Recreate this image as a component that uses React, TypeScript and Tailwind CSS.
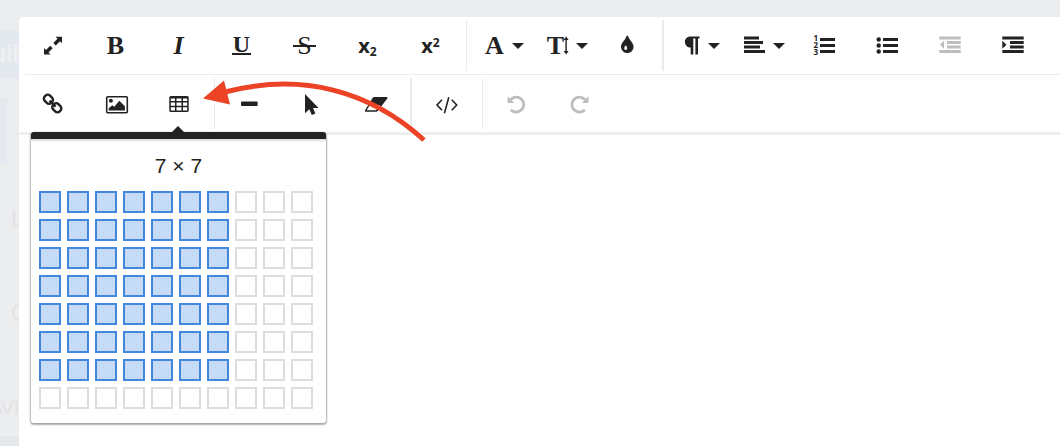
import React, { useState } from 'react';
import clsx from 'clsx';

const COLUMNS = 10;
const ROWS = 8;

type ToolButtonProps = {
  label: string;
  disabled?: boolean;
  dropdown?: boolean;
  onClick?: () => void;
  children: React.ReactNode;
};

const ToolButton: React.FC<ToolButtonProps> = ({ label, disabled, dropdown, onClick, children }) => (
  <button
    type="button"
    aria-label={label}
    disabled={disabled}
    onClick={onClick}
    className={clsx(
      'flex h-[57px] w-[63px] shrink-0 items-center justify-center',
      disabled ? 'text-[#bdbdbd]' : 'text-[#222222]',
      dropdown && 'gap-2 pl-1.5'
    )}
  >
    {children}
    {dropdown && (
      <svg width="12" height="6" viewBox="0 0 12 6" fill="currentColor" aria-hidden="true">
        <path d="M0 0h12L6 6z" />
      </svg>
    )}
  </button>
);

const Icon: React.FC<{ width?: number; children: React.ReactNode }> = ({ width = 23, children }) => (
  <svg
    width={width}
    height="23"
    viewBox={`0 0 ${width} 23`}
    fill="currentColor"
    className="shrink-0 overflow-visible"
    aria-hidden="true"
  >
    {children}
  </svg>
);

const Separator: React.FC<{ thick?: boolean }> = ({ thick }) => (
  <div
    className={clsx('my-[3px] shrink-0 self-stretch bg-[#ebebeb]', thick ? 'mx-[3px] w-0.5' : 'mr-[3px] ml-1 w-px')}
  />
);

const TableMenu: React.FC = () => {
  const [size, setSize] = useState({ rows: 7, cols: 7 });

  return (
    <div className="absolute top-full -left-[116px] z-10 w-[295px] rounded-[3px] border-t-[7px] border-[#222222] bg-white shadow-[0_1px_3px_rgba(0,0,0,0.35),0_1px_1px_1px_rgba(0,0,0,0.16)]">
      <svg
        width="12"
        height="6"
        viewBox="0 0 12 6"
        className="absolute -top-[13px] left-[141px] text-[#222222]"
        fill="currentColor"
        aria-hidden="true"
      >
        <path d="M0 6L6 0l6 6z" />
      </svg>
      <div className="h-[3px] bg-gradient-to-b from-[#d6d4d6] to-white" />
      <div className="px-2 pt-2 pb-[14px]">
        <div className="mb-[10px] text-center text-[21px] leading-[31px] text-[#222222]">
          {size.rows} × {size.cols}
        </div>
        <div className="flex flex-col gap-1.5">
          {Array.from({ length: ROWS }, (_, row) => (
            <div key={row} className="flex gap-1.5">
              {Array.from({ length: COLUMNS }, (_, col) => (
                <button
                  key={col}
                  type="button"
                  aria-label={`${row + 1} × ${col + 1}`}
                  onMouseEnter={() => setSize({ rows: row + 1, cols: col + 1 })}
                  className={clsx(
                    'size-[22px] shrink-0 border-2',
                    row < size.rows && col < size.cols
                      ? 'border-[#4287de] bg-[#c6dbf5]'
                      : 'border-[#dddddd] bg-white'
                  )}
                />
              ))}
            </div>
          ))}
        </div>
      </div>
    </div>
  );
};

// Dimmed page that shows through beside the editor
const Backdrop: React.FC = () => (
  <div className="w-[19px] shrink-0 overflow-hidden whitespace-nowrap" aria-hidden="true">
    <div className="mt-[30px] flex h-12 items-center justify-end bg-[#e3e9ee] text-[23px] font-bold text-[#eef0f2]">
      uil
    </div>
    <div className="mt-5 h-[65px] w-[7px] bg-[#e3e9ee]" />
    <div className="mt-10 pl-[11px] text-[23px] leading-8 text-[#e2e3e5]">L</div>
    <div className="mt-[62px] pl-[11px] text-[23px] leading-8 text-[#e2e3e5]">C</div>
    <div className="mt-[67px] flex justify-end text-[19px] leading-6 text-[#e2e3e5]">AVI</div>
    <div className="mt-4 h-3 bg-[#e2e8eb]" />
  </div>
);

const App: React.FC = () => {
  const [tableOpen, setTableOpen] = useState(true);

  return (
    <div className="flex h-screen overflow-hidden bg-[#ecedef] font-['Liberation_Sans',Arial,sans-serif]">
      <Backdrop />

      <main className="mt-[17px] flex min-w-0 flex-1 flex-col rounded-tl-[5px] bg-white">
        <div role="toolbar" aria-label="Formatting" className="relative border-b-[3px] border-[#edeeef]">
          <div className="flex pl-0.5">
            <ToolButton label="Fullscreen">
              <Icon>
                <path d="M14.500 2.800H21v6.500l-2-2-4.200 4.200-2.500-2.500 4.200-4.200zM9.500 20.500H3V14l2 2 4.200-4.200 2.500 2.500-4.200 4.200z" />
                <path d="M8.500 8.500l7 7" stroke="white" strokeWidth="1.600" />
              </Icon>
            </ToolButton>
            <ToolButton label="Bold">
              <span className="font-['Liberation_Serif',serif] text-[26px] leading-7 font-bold">B</span>
            </ToolButton>
            <ToolButton label="Italic">
              <span className="font-['Liberation_Serif',serif] text-[26px] leading-7 font-bold italic">I</span>
            </ToolButton>
            <ToolButton label="Underline">
              <span className="border-b-2 px-px font-['Liberation_Serif',serif] text-[24px] leading-[17px] font-bold">
                U
              </span>
            </ToolButton>
            <ToolButton label="Strikethrough">
              <span className="relative px-1 font-['Liberation_Serif',serif] text-[26px] leading-7">
                S
                <span className="absolute inset-x-0 top-[13px] h-0.5 bg-current" />
              </span>
            </ToolButton>
            <ToolButton label="Subscript">
              <span className="font-['Open_Sans',sans-serif] text-[20px] leading-7 font-bold">
                x<sub className="text-[12px]">2</sub>
              </span>
            </ToolButton>
            <ToolButton label="Superscript">
              <span className="font-['Open_Sans',sans-serif] text-[20px] leading-7 font-bold">
                x<sup className="text-[12px]">2</sup>
              </span>
            </ToolButton>

            <Separator />

            <ToolButton label="Font family" dropdown>
              <span className="font-['Liberation_Serif',serif] text-[26px] leading-7 font-bold">A</span>
            </ToolButton>
            <ToolButton label="Font size" dropdown>
              <span className="flex items-center">
                <span className="font-['Liberation_Serif',serif] text-[26px] leading-7 font-bold">T</span>
                <Icon width={4}>
                  <path d="M1.400 5h1.400v13H1.400z" />
                  <path d="M2.100 2.500L4.600 6h-5zM2.100 20.500L-.4 17h5z" />
                </Icon>
              </span>
            </ToolButton>
            <ToolButton label="Colors">
              <Icon>
                <path d="M11.300 1.700c.6 0 .9.500 1.100 1.100 1 3.800 5.200 5.800 5.200 10a6.300 6.300 0 0 1-12.600 0c0-4.200 4.200-6.200 5.200-10 .2-.6.500-1.100 1.100-1.100z" />
                <path d="M9.700 11.200c.8 1.300 1.500 1.900 1.500 3.100a1.500 1.700 0 0 1-3 0c0-1.200.7-1.800 1.500-3.100z" fill="white" />
              </Icon>
            </ToolButton>

            <Separator thick />

            <ToolButton label="Paragraph format" dropdown>
              <Icon width={16}>
                <path d="M6 2.500h9.500v2H14v16h-2.600v-16H9.300v16H6.700v-7A5.500 5.500 0 0 1 6 2.500z" />
              </Icon>
            </ToolButton>
            <ToolButton label="Align" dropdown>
              <Icon width={21}>
                <path d="M0 2.500h15v3H0zM0 7h19v3H0zM0 11.500h16v3H0zM0 16h21v3H0z" />
              </Icon>
            </ToolButton>
            <ToolButton label="Ordered list">
              <Icon>
                <path d="M7 4h15v3H7zM7 10h15v3H7zM7 16h15v3H7z" />
                <text className="font-['Open_Sans',sans-serif] text-[8px] font-bold">
                  <tspan x="0.500" y="7">1</tspan>
                  <tspan x="0.500" y="14">2</tspan>
                  <tspan x="0.500" y="21">3</tspan>
                </text>
              </Icon>
            </ToolButton>
            <ToolButton label="Unordered list">
              <Icon>
                <path d="M7 4h15v3H7zM7 10h15v3H7zM7 16h15v3H7z" />
                <circle cx="2.700" cy="5.500" r="2.200" />
                <circle cx="2.700" cy="11.500" r="2.200" />
                <circle cx="2.700" cy="17.500" r="2.200" />
              </Icon>
            </ToolButton>
            <ToolButton label="Decrease indent" disabled>
              <Icon>
                <path d="M.3 2.500h21.400v3H.3zM8 7h13.700v3H8zM8 11.500h13.700v3H8zM.3 16h21.400v3H.3zM5 6.700v8l-4.200-4z" />
              </Icon>
            </ToolButton>
            <ToolButton label="Increase indent">
              <Icon>
                <path d="M.3 2.500h21.400v3H.3zM8 7h13.700v3H8zM8 11.500h13.700v3H8zM.3 16h21.400v3H.3zM.3 6.700v8l4.200-4z" />
              </Icon>
            </ToolButton>
          </div>

          <div className="ml-1.5 h-px bg-[#ebebeb]" />

          <div className="flex pl-0.5">
            <ToolButton label="Insert link">
              <Icon>
                <g fill="none" stroke="currentColor" strokeWidth="2.400">
                  <rect x="-4.600" y="-3.700" width="9.200" height="7.400" rx="3.200" transform="translate(7.400 7.300) rotate(45)" />
                  <rect x="-4.600" y="-3.700" width="9.200" height="7.400" rx="3.200" transform="translate(15.800 15.800) rotate(45)" />
                  <path d="M8.600 8.600l6 6" />
                </g>
              </Icon>
            </ToolButton>
            <ToolButton label="Insert image">
              <Icon>
                <rect x="2.700" y="4.700" width="20.600" height="16" rx="1" fill="none" stroke="currentColor" strokeWidth="1.600" />
                <circle cx="6.900" cy="8.700" r="2" />
                <path d="M4.700 18.500v-2.200l3.600-3 2 1.500 5-6.100 5.600 5.500v4.300z" />
              </Icon>
            </ToolButton>
            <div className="relative">
              <ToolButton label="Insert table" onClick={() => setTableOpen(!tableOpen)}>
                <Icon>
                  <path
                    fillRule="evenodd"
                    d="M3.800 4h16.400a1.500 1.500 0 0 1 1.500 1.500v13a1.500 1.500 0 0 1-1.500 1.500H3.800a1.500 1.500 0 0 1-1.500-1.500v-13A1.500 1.500 0 0 1 3.800 4zM3.800 6.500v2.500h4.200V6.500zM9.500 6.500v2.500h5V6.500zM16 6.500v2.500h4.200V6.500zM3.800 10.500v3.200h4.200v-3.200zM9.500 10.500v3.200h5v-3.200zM16 10.500v3.200h4.200v-3.200zM3.800 15.200v3.200h4.200v-3.200zM9.500 15.200v3.200h5v-3.200zM16 15.200v3.200h4.200v-3.200z"
                  />
                </Icon>
              </ToolButton>
              {tableOpen && <TableMenu />}
            </div>

            <Separator />

            <ToolButton label="Insert horizontal line">
              <Icon>
                <rect x="3" y="9.500" width="16.600" height="4.600" rx="1" />
              </Icon>
            </ToolButton>
            <ToolButton label="Select all">
              <Icon>
                <path d="M4 2v19.300l4.300-4 2.500 5.700 3.600-1.500-2.400-5.600h5.600z" />
              </Icon>
            </ToolButton>
            <ToolButton label="Clear formatting">
              <Icon>
                <path
                  fillRule="evenodd"
                  d="M10.500 4.900h12a1 1 0 0 1 .8 1.700L13.700 19a2 2 0 0 1-1.500.7H2a1 1 0 0 1-.8-1.700L8.900 5.600a2 2 0 0 1 1.600-.7zM5.800 13L2.700 18.300h9.200l4.200-5.300z"
                />
              </Icon>
            </ToolButton>

            <Separator thick />

            <ToolButton label="Code view">
              <Icon>
                <path
                  d="M7 7.800L2 13l5 5.200M16.700 7.800l5 5.200-5 5.200M13.800 5.300L9.400 21.200"
                  fill="none"
                  stroke="currentColor"
                  strokeWidth="1.600"
                />
              </Icon>
            </ToolButton>

            <Separator />

            <ToolButton label="Undo" disabled>
              <Icon>
                <path d="M4.400 7.800A7.500 7.500 0 1 1 4.700 17.700" fill="none" stroke="currentColor" strokeWidth="2.800" />
                <path d="M1.600 4.300v6.700h6.700z" />
              </Icon>
            </ToolButton>
            <ToolButton label="Redo" disabled>
              <Icon>
                <path d="M16.200 7.800A7.500 7.500 0 1 0 15.900 17.700" fill="none" stroke="currentColor" strokeWidth="2.800" />
                <path d="M19.500 4.300v6.700h-6.700z" />
              </Icon>
            </ToolButton>
          </div>

          {/* Callout arrow pointing at the table button */}
          <svg
            width="224"
            height="66"
            viewBox="0 0 224 66"
            className="pointer-events-none absolute top-[60px] left-[183px] z-20"
            aria-hidden="true"
          >
            <path d="M222 63C168 14 100 -5 23 15" fill="none" stroke="#ec4326" strokeWidth="5" />
            <path d="M1 21.500L22 3.500l6 24z" fill="#ec4326" />
          </svg>
        </div>

        <div role="textbox" aria-label="Content" contentEditable className="flex-1 outline-none" />
      </main>
    </div>
  );
};

export default App;
